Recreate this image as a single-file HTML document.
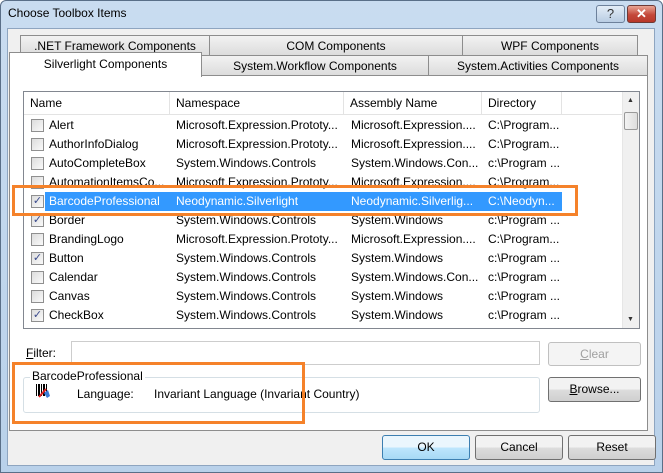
<!DOCTYPE html>
<html><head><style>
*{box-sizing:border-box;margin:0;padding:0}
body{width:663px;height:473px;overflow:hidden;font-family:"Liberation Sans",sans-serif;font-size:12px;color:#000;background:#fff}
.a{position:absolute}
.win{left:0;top:0;width:663px;height:473px;background:linear-gradient(#c9dcf0,#b9d1ea);border:1px solid #5a6f88;border-radius:6px 6px 0 0}
.title{left:8px;top:6px;font-size:12px}
.body{left:7px;top:28px;width:648px;height:438px;background:#f0f0f0;border:1px solid #8ea5c0}
.tab{background:linear-gradient(#f2f2f2,#dcdcdc);border:1px solid #8d8d8d;text-align:center;line-height:20px}
.panel{left:9px;top:75px;width:639px;height:356px;background:#fff;border:1px solid #8d8d8d}
.list{left:23px;top:91px;width:617px;height:238px;border:1px solid #828790;background:#fff}
.hd{top:0;height:23px;line-height:22px;border-right:1px solid #e3e3e3;padding-left:6px;border-bottom:1px solid #e3e3e3}
.row{left:0;width:598px;height:19px;line-height:19px}
.row span{position:absolute;top:0;white-space:nowrap}
.cb{width:13px;height:13px;border:1px solid #8f8f8f;background:linear-gradient(135deg,#dcdcdc,#fafafa);top:3px!important;left:7px;font-size:11px;line-height:11px;color:#3a4a8c;text-align:center}
.btn{border:1px solid #707070;border-radius:3px;background:linear-gradient(#f2f2f2 50%,#dddddd 50%,#cfcfcf);text-align:center;line-height:22px}
.or{border:3px solid #f5822a}
</style></head><body>
<div class="a win"></div>
<div class="a title">Choose Toolbox Items</div>
<div class="a" style="left:596px;top:5px;width:29px;height:18px;border:1px solid #6d819b;border-radius:3px;background:linear-gradient(#e3edf7,#b9cde3);text-align:center;font-size:13px;line-height:16px;color:#333">?</div>
<div class="a" style="left:627px;top:5px;width:29px;height:18px;border:1px solid #6d3a36;border-radius:3px;background:linear-gradient(#e8a594,#c4483a 55%,#b8382b);text-align:center;font-size:13px;font-weight:bold;line-height:16px;color:#fff">✕</div>
<div class="a body"></div>
<div class="a tab" style="left:20px;top:35px;width:190px;height:21px">.NET Framework Components</div>
<div class="a tab" style="left:209px;top:35px;width:254px;height:21px">COM Components</div>
<div class="a tab" style="left:462px;top:35px;width:176px;height:21px">WPF Components</div>
<div class="a panel"></div>
<div class="a tab" style="left:201px;top:55px;width:228px;height:21px">System.Workflow Components</div>
<div class="a tab" style="left:428px;top:55px;width:220px;height:21px">System.Activities Components</div>
<div class="a" style="left:9px;top:52px;width:193px;height:25px;background:#fff;border:1px solid #8d8d8d;border-bottom:none;text-align:center;line-height:22px">Silverlight Components</div>
<div class="a list">
<div class="a hd" style="left:0;width:146px">Name</div>
<div class="a hd" style="left:146px;width:174px">Namespace</div>
<div class="a hd" style="left:320px;width:138px">Assembly Name</div>
<div class="a hd" style="left:458px;width:80px">Directory</div>
<div class="a hd" style="left:538px;width:60px;border-right:none"></div>
<div class="a" style="left:598px;top:0;width:17px;height:236px;background:#f0f0f0;border-left:1px solid #e6e6e6">
<div class="a" style="left:4px;top:5px;font-size:7px;color:#333">▲</div>
<div class="a" style="left:1px;top:20px;width:14px;height:18px;border:1px solid #999;border-radius:2px;background:linear-gradient(90deg,#f3f3f3,#ddd)"></div>
<div class="a" style="left:4px;top:224px;font-size:7px;color:#333">▼</div>
</div>
<div class="a" style="left:0;top:24px;width:598px;height:212px;overflow:hidden">
<div class="a row" style="top:0"><span class="cb"></span><span style="left:25px">Alert</span><span style="left:152px">Microsoft.Expression.Prototy...</span><span style="left:327px">Microsoft.Expression....</span><span style="left:464px">C:\Program...</span></div>
<div class="a row" style="top:19px"><span class="cb"></span><span style="left:25px">AuthorInfoDialog</span><span style="left:152px">Microsoft.Expression.Prototy...</span><span style="left:327px">Microsoft.Expression....</span><span style="left:464px">C:\Program...</span></div>
<div class="a row" style="top:38px"><span class="cb"></span><span style="left:25px">AutoCompleteBox</span><span style="left:152px">System.Windows.Controls</span><span style="left:327px">System.Windows.Con...</span><span style="left:464px">c:\Program ...</span></div>
<div class="a row" style="top:57px"><span class="cb"></span><span style="left:25px">AutomationItemsCo...</span><span style="left:152px">Microsoft.Expression.Prototy...</span><span style="left:327px">Microsoft.Expression....</span><span style="left:464px">C:\Program...</span></div>
<div class="a row" style="top:76px"><span class="cb">✓</span><span style="left:21px;width:517px;height:19px;background:#3399ff"></span><span style="left:25px;color:#fff">BarcodeProfessional</span><span style="left:152px;color:#fff">Neodynamic.Silverlight</span><span style="left:327px;color:#fff">Neodynamic.Silverlig...</span><span style="left:464px;color:#fff">C:\Neodyn...</span></div>
<div class="a row" style="top:95px"><span class="cb">✓</span><span style="left:25px">Border</span><span style="left:152px">System.Windows.Controls</span><span style="left:327px">System.Windows</span><span style="left:464px">c:\Program ...</span></div>
<div class="a row" style="top:114px"><span class="cb"></span><span style="left:25px">BrandingLogo</span><span style="left:152px">Microsoft.Expression.Prototy...</span><span style="left:327px">Microsoft.Expression....</span><span style="left:464px">C:\Program...</span></div>
<div class="a row" style="top:133px"><span class="cb">✓</span><span style="left:25px">Button</span><span style="left:152px">System.Windows.Controls</span><span style="left:327px">System.Windows</span><span style="left:464px">c:\Program ...</span></div>
<div class="a row" style="top:152px"><span class="cb"></span><span style="left:25px">Calendar</span><span style="left:152px">System.Windows.Controls</span><span style="left:327px">System.Windows.Con...</span><span style="left:464px">c:\Program ...</span></div>
<div class="a row" style="top:171px"><span class="cb"></span><span style="left:25px">Canvas</span><span style="left:152px">System.Windows.Controls</span><span style="left:327px">System.Windows</span><span style="left:464px">c:\Program ...</span></div>
<div class="a row" style="top:190px"><span class="cb">✓</span><span style="left:25px">CheckBox</span><span style="left:152px">System.Windows.Controls</span><span style="left:327px">System.Windows</span><span style="left:464px">c:\Program ...</span></div>
<div class="a row" style="top:209px"><span class="cb"></span><span style="left:25px">CheckedListBox</span><span style="left:152px">Microsoft.Expression.Prototy...</span><span style="left:327px">Microsoft.Expression....</span><span style="left:464px">C:\Program...</span></div>
</div>
</div>
<div class="a or" style="left:12px;top:185px;width:566px;height:31px"></div>
<div class="a" style="left:26px;top:346px"><u>F</u>ilter:</div>
<div class="a" style="left:71px;top:341px;width:469px;height:24px;border:1px solid #cdcdcd;background:#fff"></div>
<div class="a btn" style="left:548px;top:342px;width:93px;height:24px;border-color:#c0c0c0;background:#f4f4f4;color:#a0a0a0"><u>C</u>lear</div>
<div class="a" style="left:23px;top:377px;width:517px;height:36px;border:1px solid #d5dfe5;border-radius:3px"></div>
<div class="a" style="left:30px;top:369px;background:#fff;padding:0 2px">BarcodeProfessional</div>
<svg class="a" style="left:36px;top:384px" width="16" height="17" viewBox="0 0 16 17"><g fill="#000"><rect x="0" y="0" width="1" height="12"/><rect x="2" y="0" width="2" height="12"/><rect x="5" y="0" width="1" height="12"/><rect x="7" y="0" width="2" height="12"/><rect x="10" y="0" width="1" height="9"/></g><path d="M3 13 L10 5" stroke="#d22" stroke-width="2"/><path d="M8 9 L12 6 L14 12 L11 14 Z" fill="#3b7bd6"/></svg>
<div class="a" style="left:77px;top:387px">Language:</div>
<div class="a" style="left:154px;top:387px">Invariant Language (Invariant Country)</div>
<div class="a btn" style="left:548px;top:377px;width:93px;height:25px"><u>B</u>rowse...</div>
<div class="a or" style="left:12px;top:362px;width:293px;height:62px"></div>
<div class="a btn" style="left:382px;top:435px;width:88px;height:25px;border-color:#3c7fb1;background:linear-gradient(#eaf6fd 50%,#bee6fd 50%,#a7d9f5)">OK</div>
<div class="a btn" style="left:475px;top:435px;width:88px;height:25px">Cancel</div>
<div class="a btn" style="left:568px;top:435px;width:88px;height:25px">Reset</div>
</body></html>
